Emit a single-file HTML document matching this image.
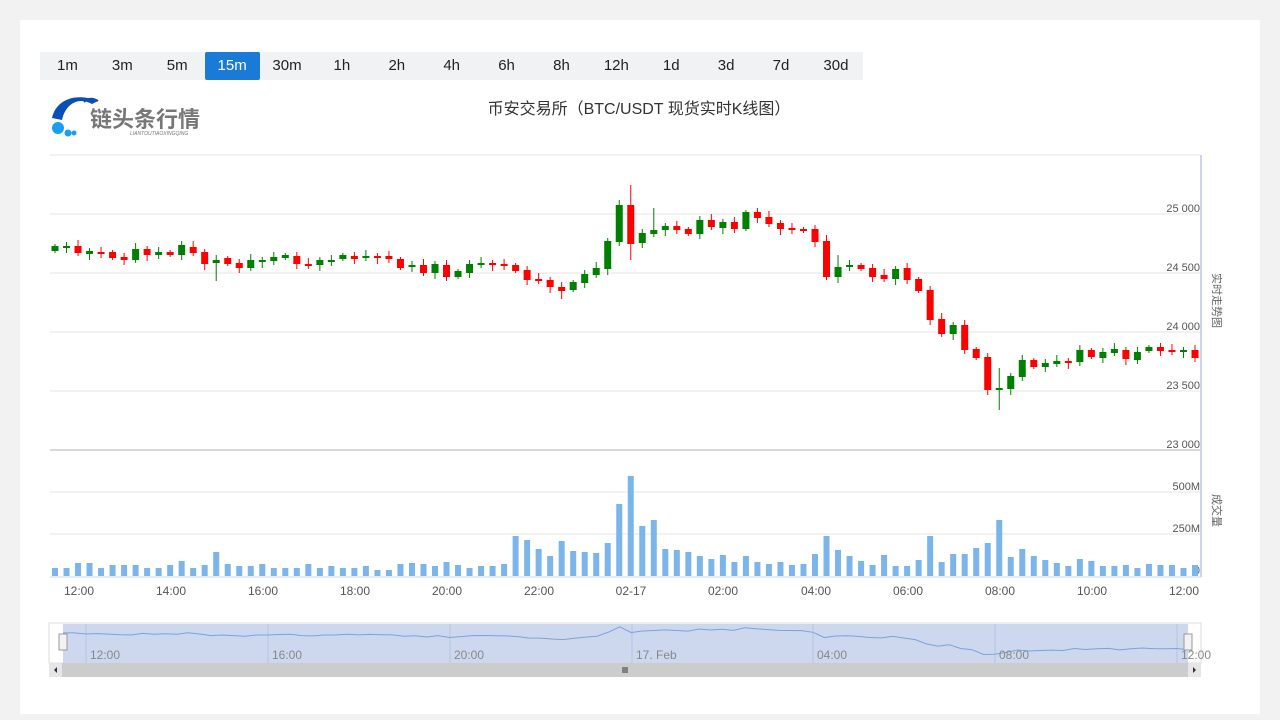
<!DOCTYPE html>
<html><head><meta charset="utf-8"><style>
body{margin:0;background:#f2f2f2;font-family:"Liberation Sans","Noto Sans CJK SC",sans-serif}
#card{position:absolute;left:20px;top:20px;width:1240px;height:694px;background:#fff}
.btns{position:absolute;left:40px;top:52px;height:28px;display:flex;background:#f1f2f4}
.btns div{width:54.9px;text-align:center;line-height:28px;font-size:15px;color:#222}
.btns .on{background:#1a7bd6;color:#fff;border-radius:2px}
</style></head><body>
<div id="card"></div>
<div class="btns"><div>1m</div><div>3m</div><div>5m</div><div class="on">15m</div><div>30m</div><div>1h</div><div>2h</div><div>4h</div><div>6h</div><div>8h</div><div>12h</div><div>1d</div><div>3d</div><div>7d</div><div>30d</div></div>
<svg style="position:absolute;left:0;top:0" width="1280" height="720" id="s" font-family="Liberation Sans, Noto Sans CJK SC, sans-serif">
<path d="M52 118 C56 100 75 92 98 101 L92 104 C80 97 66 102 62 120 Z" fill="#0a4fb8"/>
<path d="M84 102 Q90 96 98 101" stroke="#0a4fb8" fill="none" stroke-width="2"/>
<circle cx="58" cy="128" r="6" fill="#18a0f0"/><circle cx="68" cy="133" r="3.5" fill="#18a0f0"/><circle cx="74" cy="133" r="2.5" fill="#18a0f0"/>
<text x="90" y="127" font-size="22" font-weight="bold" fill="#777">链头条行情</text>
<text x="130" y="135" font-size="5" fill="#777" font-style="italic">LIANTOUTIAOXINGQING</text>
<text x="639" y="114" font-size="16" fill="#333" text-anchor="middle">币安交易所（BTC/USDT 现货实时K线图）</text>
<g stroke="#e6e6e6"><line x1="50" x2="1200" y1="155" y2="155"/><line x1="50" x2="1200" y1="214" y2="214"/><line x1="50" x2="1200" y1="273" y2="273"/><line x1="50" x2="1200" y1="332" y2="332"/><line x1="50" x2="1200" y1="391" y2="391"/><line x1="50" x2="1200" y1="450" y2="450" stroke="#d8d8d8" stroke-width="2"/><line x1="50" x2="1200" y1="492" y2="492"/><line x1="50" x2="1200" y1="534" y2="534"/></g>
<line x1="1201" x2="1201" y1="155" y2="577" stroke="#ccd6eb" stroke-width="2"/>
<line x1="50" x2="1201" y1="577" y2="577" stroke="#ccd6eb"/>
<g font-size="11" fill="#555" text-anchor="end"><text x="1200" y="212">25 000</text><text x="1200" y="271">24 500</text><text x="1200" y="330">24 000</text><text x="1200" y="389">23 500</text><text x="1200" y="448">23 000</text><text x="1200" y="490">500M</text><text x="1200" y="532">250M</text><text x="1200" y="574">0</text></g>
<g font-size="11" fill="#666"><text transform="translate(1213,273) rotate(90)">实时走势图</text><text transform="translate(1213,494) rotate(90)">成交量</text></g>
<g font-size="12" fill="#555" text-anchor="middle"><text x="79" y="595">12:00</text><text x="171" y="595">14:00</text><text x="263" y="595">16:00</text><text x="355" y="595">18:00</text><text x="447" y="595">20:00</text><text x="539" y="595">22:00</text><text x="631" y="595">02-17</text><text x="723" y="595">02:00</text><text x="816" y="595">04:00</text><text x="908" y="595">06:00</text><text x="1000" y="595">08:00</text><text x="1092" y="595">10:00</text><text x="1184" y="595">12:00</text></g>
<g id="c"></g>
<rect x="49" y="623" width="1152" height="40" fill="#fff" stroke="#ddd"/>
<rect x="63" y="624" width="1125" height="39" fill="#cdd8ee"/>
<g stroke="#b8c4dc"><line x1="86" x2="86" y1="624" y2="663"/><line x1="268" x2="268" y1="624" y2="663"/><line x1="450" x2="450" y1="624" y2="663"/><line x1="632" x2="632" y1="624" y2="663"/><line x1="813" x2="813" y1="624" y2="663"/><line x1="995" x2="995" y1="624" y2="663"/><line x1="1177" x2="1177" y1="624" y2="663"/></g>
<path id="nav" fill="none" stroke="#7aa3de" stroke-width="1"/>
<g font-size="12" fill="#888"><text x="90" y="659">12:00</text><text x="272" y="659">16:00</text><text x="454" y="659">20:00</text><text x="636" y="659">17. Feb</text><text x="817" y="659">04:00</text><text x="999" y="659">08:00</text><text x="1181" y="659">12:00</text></g>
<rect x="59" y="634" width="8" height="16" fill="#f2f2f2" stroke="#999"/><rect x="1184" y="634" width="8" height="16" fill="#f2f2f2" stroke="#999"/>
<rect x="49" y="663" width="1152" height="14" fill="#ccc"/>
<rect x="49" y="663" width="13" height="14" fill="#e6e6e6"/><rect x="1188" y="663" width="13" height="14" fill="#e6e6e6"/>
<path d="M57 667 L54 670 L57 673Z M1193 667 L1196 670 L1193 673Z" fill="#333"/>
<path d="M623 667v6M625 667v6M627 667v6" stroke="#333"/>
</svg>
<script>
var C=[['g',246,251],['g',246,246],['r',246,253],['g',251,254],['r',252,252],['r',252,258],['r',257,260],['g',249,260],['r',249,255],['g',252,255],['r',252,255],['g',245,255],['r',247,253],['r',252,264],['g',260,263,0,281],['r',258,264],['r',263,268],['g',260,268],['g',260,260],['g',257,261],['g',255,258],['r',256,264],['r',264,264],['g',260,265],['g',260,260],['g',255,259],['r',256,259],['g',256,258],['r',256,256],['r',256,259],['r',259,268],['g',265,267],['r',265,273],['g',264,273],['r',265,277],['g',271,277],['g',264,273],['g',263,265],
['r',263,264],['r',264,265],['r',265,271],['r',270,280],['r',279,281],['r',280,287],['r',287,291,0,299],['g',282,290],['g',274,283],['g',268,275],['g',241,269],['g',205,242],['r',205,244,185,260],['g',233,243],['g',230,234,208],['g',226,230],['r',226,230],['r',229,234],['g',220,234],['r',220,227],['g',222,228],['r',222,229],['g',212,229],['r',212,218],['r',217,224],['r',223,229],['r',228,228],['r',229,229],['r',229,242],['r',241,277],['g',267,277,255],['g',265,267],['r',265,269],['r',268,277],['r',275,279],['g',269,279],['r',268,280],['r',279,291],['r',290,320],['r',319,334],['g',325,334],['r',325,350],['r',349,358],['r',357,390],['g',388,390,368,410],['g',376,389],['g',360,377],['r',360,367],['g',363,367],['g',361,364],['r',361,361],['g',350,362],['r',350,357],['g',352,358],['g',349,353],['r',350,359],['g',352,360],['g',347,351],['r',347,351],['r',350,350],['g',350,350],['r',350,358]];
var v=[8,8,13,13,8,11,11,11,8,8,11,15,8,11,24,12,10,10,12,8,8,8,12,8,10,8,8,10,6,6,12,13,12,10,14,11,8,10,10,12,40,36,27,20,35,25,24,23,33,72,100,50,56,27,26,24,20,17,21,14,20,14,12,14,11,12,22,40,26,20,15,11,21,10,10,16,40,14,22,22,28,33,56,19,27,20,16,13,10,17,15,10,10,11,8,12,11,11,8,11,10,11];
var h='',n=C.length,st=(1195-55)/(n-1),nav='';
for(var i=0;i<n;i++){var x=55+i*st,d=C[i],col=d[0]=='g'?'#008000':'#ff0000',t=d[1],b=d[2];if(b-t<2)b=t+2;
var hi=d[3]||t-2-(i*7%5),lo=d[4]||b+2+(i*3%5);
h+='<line x1="'+x+'" x2="'+x+'" y1="'+hi+'" y2="'+lo+'" stroke="'+col+'"/><rect x="'+(x-3.5)+'" y="'+t+'" width="7" height="'+(b-t)+'" fill="'+col+'"/>';
var vv=v[i]||10;h+='<rect x="'+(x-3)+'" y="'+(576-vv)+'" width="6" height="'+vv+'" fill="#7cb5ec"/>';
var c=d[0]=='g'?t:b;var nx=63+i*(1125/(n-1)),ny=626+(c-200)*0.15;nav+=(i?'L':'M')+nx+' '+ny;}
document.getElementById('c').innerHTML=h;document.getElementById('nav').setAttribute('d',nav);
</script>
</body></html>
